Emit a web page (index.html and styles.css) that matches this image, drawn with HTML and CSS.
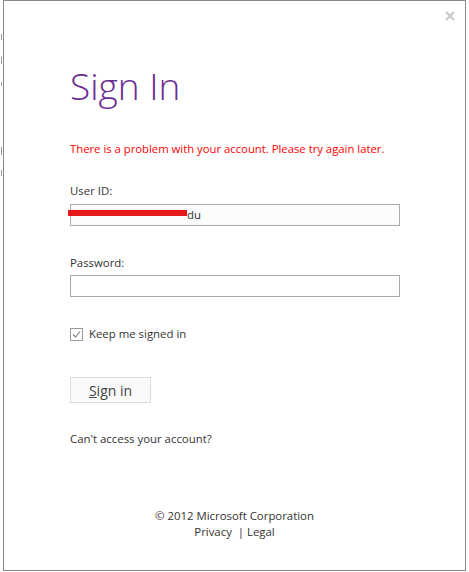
FILE: index.html
```html
<!DOCTYPE html>
<html>
<head>
<meta charset="utf-8">
<link rel="stylesheet" href="styles.css">
</head>
<body>
<div class="behind">
  <span class="frag f1"></span>
  <span class="frag f2"></span>
  <span class="frag f3"></span>
  <span class="frag f4"></span>
  <span class="frag f5"></span>
</div>
<div class="window">
  <div class="close"><svg width="10" height="10" viewBox="0 0 10 10"><path d="M1 1 L9 9 M9 1 L1 9" stroke="#c4c4c4" stroke-width="1.8"/></svg></div>
  <div class="content">
    <h1 class="title">Sign In</h1>
    <p class="error">There is a problem with your account. Please try again later.</p>
    <label class="label">User ID:</label>
    <div class="field field-filled"><span class="redact"></span><span class="tail">du</span></div>
    <label class="label label-pw">Password:</label>
    <div class="field field-pw"></div>
    <div class="keep">
      <span class="check"><svg width="11" height="11" viewBox="0 0 11 11"><path d="M2 5.5 L4.5 8 L9 2.5" fill="none" stroke="#7a7a7a" stroke-width="1.1"/></svg></span>
      <span class="keep-text">Keep me signed in</span>
    </div>
    <button class="btn"><span class="u">S</span>ign in</button>
    <div class="cant">Can't access your account?</div>
    <div class="footer">
      <div>&copy; 2012 Microsoft Corporation</div>
      <div>Privacy &nbsp;| Legal</div>
    </div>
  </div>
</div>
</body>
</html>
```
FILE: styles.css
```css
html, body {
  margin: 0;
  padding: 0;
  background: #ffffff;
}
body {
  width: 469px;
  height: 572px;
  position: relative;
  overflow: hidden;
  font-family: "Open Sans", "Noto Sans", sans-serif;
  color: #333333;
}
.behind {
  position: absolute;
  left: 0;
  top: 0;
  width: 3px;
  height: 200px;
}
.frag {
  position: absolute;
  left: 1px;
  width: 1px;
  background: #9a9a9a;
}
.f1 { top: 34px; height: 6px; }
.f2 { top: 57px; height: 7px; }
.f3 { top: 82px; height: 4px; }
.f4 { top: 147px; height: 8px; }
.f5 { top: 170px; height: 6px; }
.window {
  position: absolute;
  left: 3px;
  top: 0;
  width: 461px;
  height: 569px;
  border: 1px solid #8a8a8a;
  background: #fff;
}
.close {
  position: absolute;
  right: 10px;
  top: 10px;
  width: 10px;
  height: 10px;
  display: flex;
}
.content {
  padding: 60px 0 0 66px;
  display: flex;
  flex-direction: column;
  align-items: flex-start;
}
.title {
  margin: 0;
  font-weight: 300;
  font-size: 37px;
  line-height: 50px;
  color: #6b2d91;
}
.error {
  margin: 30px 0 0 0;
  color: #ff0000;
  font-size: 11.3px;
  line-height: 16px;
}
.label {
  margin-top: 26px;
  font-size: 11.4px;
  line-height: 16px;
}
.label-pw { margin-top: 29px; }
.field {
  margin-top: 5px;
  width: 328px;
  height: 20px;
  border: 1px solid #ababab;
  background: #fff;
  position: relative;
  font-size: 11.4px;
  line-height: 20px;
}
.field-pw { margin-top: 4px; }
.field-filled { background: #fbfbfb; }
.redact {
  position: absolute;
  left: -3px;
  top: 5px;
  width: 119px;
  height: 6px;
  background: #e3191c;
}
.tail {
  position: absolute;
  left: 116px;
  top: 0;
}
.keep {
  margin-top: 29px;
  display: flex;
  align-items: center;
  font-size: 11.4px;
  line-height: 16px;
}
.check {
  width: 11px;
  height: 11px;
  border: 1px solid #9a9a9a;
  margin-right: 6px;
  display: flex;
}
.btn {
  margin-top: 35px;
  width: 81px;
  height: 26px;
  border: 1px solid #dcdcdc;
  background: #fafafa;
  font-family: inherit;
  font-size: 14px;
  color: #444;
  padding: 0;
}
.u { text-decoration: underline; }
.cant {
  margin-top: 28px;
  font-size: 11.4px;
  line-height: 16px;
}
.footer {
  margin-top: 61px;
  align-self: stretch;
  margin-left: -66px;
  text-align: center;
  font-size: 11.4px;
  line-height: 16px;
}
```
